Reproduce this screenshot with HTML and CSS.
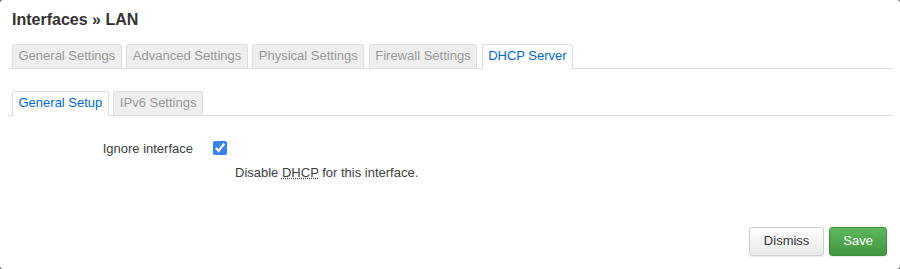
FILE: index.html
```html
<!DOCTYPE html>
<html>
<head>
<meta charset="utf-8">
<link rel="stylesheet" href="styles.css">
</head>
<body>
<div class="modal">
  <h4 class="title">Interfaces » LAN</h4>
  <ul class="tabs main-tabs">
    <li class="tab">General Settings</li>
    <li class="tab">Advanced Settings</li>
    <li class="tab">Physical Settings</li>
    <li class="tab">Firewall Settings</li>
    <li class="tab active">DHCP Server</li>
  </ul>
  <ul class="tabs sub-tabs">
    <li class="tab active">General Setup</li>
    <li class="tab">IPv6 Settings</li>
  </ul>
  <div class="form-row">
    <label class="label">Ignore interface</label>
    <div class="field">
      <input class="check" type="checkbox" checked>
      <div class="desc">Disable <abbr title="Dynamic Host Configuration Protocol">DHCP</abbr> for this interface.</div>
    </div>
  </div>
  <div class="actions">
    <button class="btn">Dismiss</button>
    <button class="btn save">Save</button>
  </div>
</div>
</body>
</html>
```
FILE: styles.css
```css
html, body {
  margin: 0;
  padding: 0;
  background: #3a3a3a;
}
body {
  font-family: "Liberation Sans", Arial, sans-serif;
  font-size: 13px;
  color: #404040;
}
.modal {
  box-sizing: border-box;
  width: 900px;
  height: 269px;
  background: #fff;
  border-radius: 3px;
  padding: 0 8px;
  display: flex;
  flex-direction: column;
}
.title {
  margin: 10px 0 0 4px;
  font-size: 16px;
  font-weight: bold;
  line-height: 19px;
  color: #333;
}
.tabs {
  list-style: none;
  margin: 0;
  padding: 0 0 0 4px;
  display: flex;
  gap: 4.5px;
  border-bottom: 1px solid #ddd;
}
.main-tabs {
  margin-top: 15px;
}
.sub-tabs {
  margin-top: 22px;
}
.tab {
  box-sizing: border-box;
  height: 24px;
  line-height: 22px;
  padding: 0 5.5px;
  border: 1px solid #ddd;
  border-bottom: none;
  border-radius: 3px 3px 0 0;
  background: #eee;
  color: #999;
  white-space: nowrap;
}
.tab.active {
  background: #fff;
  color: #0069d6;
  height: 25px;
  margin-bottom: -1px;
}
.form-row {
  display: flex;
  margin-top: 24px;
}
.label {
  width: 185px;
  text-align: right;
  line-height: 16px;
  padding-top: 1px;
}
.field {
  margin-left: 20px;
}
.check {
  display: block;
  width: 14px;
  height: 14px;
  margin: 1px 0 0 0;
  accent-color: #3b82e8;
}
.desc {
  margin-top: 10px;
  margin-left: 22px;
  line-height: 16px;
}
abbr {
  text-decoration: underline dotted;
}
.actions {
  margin-top: auto;
  margin-bottom: 13px;
  margin-right: 5px;
  display: flex;
  justify-content: flex-end;
  gap: 5px;
}
.btn {
  font-family: "Liberation Sans", Arial, sans-serif;
  font-size: 13px;
  height: 29px;
  padding: 0 14px;
  border: 1px solid #ccc;
  border-radius: 3px;
  background: linear-gradient(#fff, #e8e8e8);
  color: #333;
  box-shadow: 0 1px 1px rgba(0,0,0,0.08);
  line-height: 26px;
  padding-bottom: 1px;
}
.btn.save {
  padding-left: 13px;
  padding-right: 13px;
  color: #fff;
  border-color: #3e8f3e;
  background: linear-gradient(#5cb85c, #419641);
}
```
